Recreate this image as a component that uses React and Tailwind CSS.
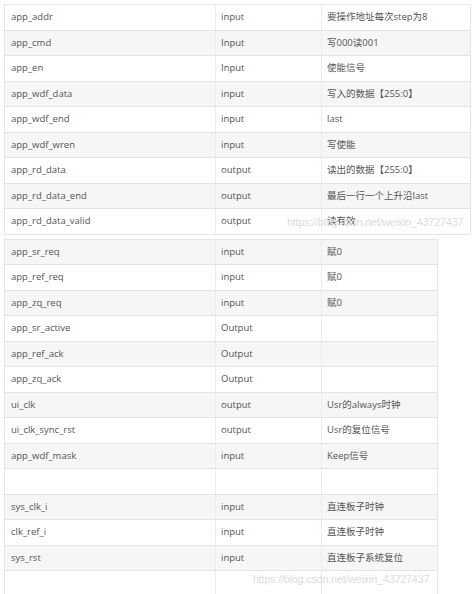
import React from "react";

const t1 = [
  ["app_addr", "input", "要操作地址每次step为8"],
  ["app_cmd", "Input", "写000读001"],
  ["app_en", "Input", "使能信号"],
  ["app_wdf_data", "input", "写入的数据【255:0】"],
  ["app_wdf_end", "input", "last"],
  ["app_wdf_wren", "input", "写使能"],
  ["app_rd_data", "output", "读出的数据【255:0】"],
  ["app_rd_data_end", "output", "最后一行一个上升沿last"],
  ["app_rd_data_valid", "output", "读有效"],
];

const t2 = [
  ["app_sr_req", "input", "赋0"],
  ["app_ref_req", "input", "赋0"],
  ["app_zq_req", "input", "赋0"],
  ["app_sr_active", "Output", ""],
  ["app_ref_ack", "Output", ""],
  ["app_zq_ack", "Output", ""],
  ["ui_clk", "output", "Usr的always时钟"],
  ["ui_clk_sync_rst", "output", "Usr的复位信号"],
  ["app_wdf_mask", "input", "Keep信号"],
  ["", "", ""],
  ["sys_clk_i", "input", "直连板子时钟"],
  ["clk_ref_i", "input", "直连板子时钟"],
  ["sys_rst", "input", "直连板子系统复位"],
  ["", "", ""],
];

function Table({ rows, width, grayOdd }) {
  return (
    <div
      className="relative border-l border-t border-r border-[#e6e6e6]"
      style={{ width }}
    >
      {rows.map((r, i) => {
        const gray = grayOdd ? i % 2 === 1 : i % 2 === 0;
        return (
          <div
            key={i}
            className={
              "flex h-[25.5px] items-center border-b border-[#e3e3e3] " +
              (gray ? "bg-[#f6f6f6]" : "bg-white")
            }
          >
            <div className="flex h-full w-[211px] items-center border-r border-[#ececec] pl-[6px]">
              {r[0]}
            </div>
            <div className="flex h-full w-[106px] items-center border-r border-[#ececec] pl-[5px]">
              {r[1]}
            </div>
            <div className="flex h-full flex-1 items-center pl-[5px]">{r[2]}</div>
          </div>
        );
      })}
    </div>
  );
}

export default function App() {
  return (
    <div
      className="relative h-[594px] w-[474px] overflow-hidden bg-white pl-[4px] pt-[4px] text-[9.5px] text-[#555]"
      style={{ fontFamily: '"Open Sans", "Noto Sans CJK SC", sans-serif' }}
    >
      <Table rows={t1} width={467} grayOdd />
      <div className="h-[4px]" />
      <Table rows={t2} width={434} />
      <div
        className="pointer-events-none absolute left-[287px] top-[214px] text-[10.8px] tracking-[-0.2px] text-[#dcdcdc]"
        style={{ fontFamily: '"Liberation Sans", sans-serif' }}
      >
        https://blog.csdn.net/weixin_43727437
      </div>
      <div
        className="pointer-events-none absolute left-[253px] top-[571px] text-[10.8px] tracking-[-0.2px] text-[#dcdcdc]"
        style={{ fontFamily: '"Liberation Sans", sans-serif' }}
      >
        https://blog.csdn.net/weixin_43727437
      </div>
    </div>
  );
}
